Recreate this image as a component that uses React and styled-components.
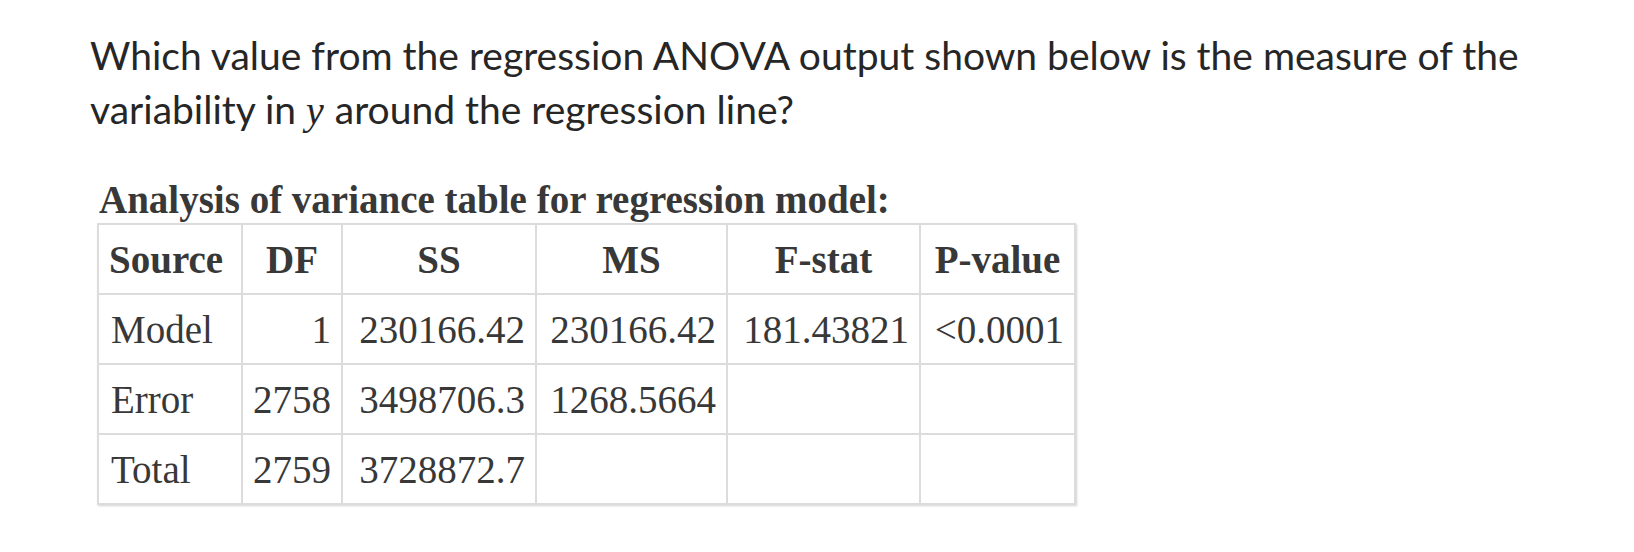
import styled, { createGlobalStyle } from "styled-components";

const GlobalStyle = createGlobalStyle`
  html, body {
    margin: 0;
    padding: 0;
    background: #fff;
  }
`;

const Page = styled.div`
  width: 1634px;
  height: 552px;
  padding: 28px 0 0 90px;
  box-sizing: border-box;
  overflow: hidden;
`;

const Question = styled.p`
  margin: 0;
  font-family: Lato, "Noto Sans", sans-serif;
  font-size: 39px;
  line-height: 54px;
  color: #262626;
`;

const MathVar = styled.span`
  font-family: "Liberation Serif", serif;
  font-style: italic;
  font-size: 40px;
  margin: 0 11px 0 10px;
`;

const Figure = styled.div`
  margin: 38px 0 0 7px;
`;

const Caption = styled.div`
  font-family: "Liberation Serif", serif;
  font-weight: bold;
  font-size: 39px;
  line-height: 47px;
  color: #383838;
  padding-left: 2px;
`;

const Table = styled.table`
  border-collapse: collapse;
  font-family: "Liberation Serif", serif;
  font-size: 39px;
  color: #383838;
  box-shadow: 1px 1px 2px rgba(0, 0, 0, 0.18);
`;

const HeadCell = styled.th`
  border: 2px solid #dcdcdc;
  height: 70px;
  padding: 0 10px;
  font-weight: bold;
  text-align: ${(p) => p.$align || "center"};
  width: ${(p) => p.$w}px;
  box-sizing: border-box;
`;

const Cell = styled.td`
  border: 2px solid #dcdcdc;
  height: 68px;
  padding: 0 ${(p) => (p.$align === "left" ? "12px" : "10px")};
  text-align: ${(p) => p.$align || "right"};
  white-space: nowrap;
`;

const widths = [144, 100, 194, 191, 193, 155];
const heads = ["Source", "DF", "SS", "MS", "F-stat", "P-value"];

const rows = [
  ["Model", "1", "230166.42", "230166.42", "181.43821", "<0.0001"],
  ["Error", "2758", "3498706.3", "1268.5664", "", ""],
  ["Total", "2759", "3728872.7", "", "", ""],
];

const App = () => {
  return (
    <Page>
      <GlobalStyle />
      <Question>
        Which value from the regression ANOVA output shown below is the measure of the
        <br />
        variability in<MathVar>y</MathVar>around the regression line?
      </Question>
      <Figure>
        <Caption>Analysis of variance table for regression model:</Caption>
        <Table>
          <thead>
            <tr>
              {heads.map((h, i) => (
                <HeadCell key={h} $w={widths[i]} $align={i === 0 ? "left" : "center"}>
                  {h}
                </HeadCell>
              ))}
            </tr>
          </thead>
          <tbody>
            {rows.map((r) => (
              <tr key={r[0]}>
                {r.map((v, i) => (
                  <Cell key={i} $align={i === 0 ? "left" : "right"}>
                    {v}
                  </Cell>
                ))}
              </tr>
            ))}
          </tbody>
        </Table>
      </Figure>
    </Page>
  );
};

export default App;
